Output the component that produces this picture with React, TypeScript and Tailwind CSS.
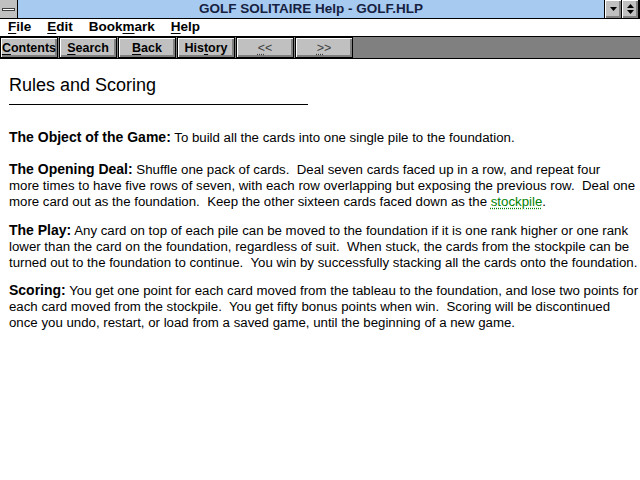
const MENUS = [
  { key: "F", rest: "ile" },
  { key: "E", rest: "dit" },
  { pre: "Book", key: "m", rest: "ark" },
  { key: "H", rest: "elp" },
];

const BUTTONS = [
  { key: "C", rest: "ontents" },
  { key: "S", rest: "earch" },
  { key: "B", rest: "ack" },
  { pre: "His", key: "t", rest: "ory" },
];

function Bevel({ children }: { children: React.ReactNode }) {
  return (
    <div className="flex h-[18px] w-[17px] items-center justify-center border-l border-black bg-[#c0c0c0] shadow-[inset_1px_1px_0_#fff,inset_-1px_-1px_0_#808080,inset_-2px_-2px_0_#808080]">
      {children}
    </div>
  );
}

function ToolButton({ children, dim }: { children: React.ReactNode; dim?: boolean }) {
  return (
    <button
      type="button"
      className={`flex h-[21px] w-[58px] items-center justify-center border border-black bg-[#c0c0c0] pt-[1px] text-[12.5px] shadow-[inset_1px_1px_0_#fff,inset_-1px_-1px_0_#808080,inset_-2px_-2px_0_#808080] ${
        dim ? "font-normal text-[#404040]" : "font-bold text-black"
      }`}
    >
      {children}
    </button>
  );
}

export default function App() {
  return (
    <div className="flex h-[480px] w-[640px] flex-col overflow-hidden bg-white font-['Liberation_Sans',Arial,sans-serif] text-black">
      <header className="flex h-[19px] border-b border-black">
        <div className="flex h-[18px] w-[18px] items-center justify-center border-r border-black bg-[#c0c0c0]">
          <div className="h-[3px] w-[13px] border border-[#404040] bg-white" />
        </div>
        <div className="flex flex-1 items-center justify-center bg-[#a6caf0] text-[13.5px] font-bold text-[#16213f]">
          GOLF SOLITAIRE Help - GOLF.HLP
        </div>
        <Bevel>
          <svg width="9" height="6" viewBox="0 0 9 6">
            <path d="M1 1h7L4.5 5z" fill="#000" />
          </svg>
        </Bevel>
        <Bevel>
          <svg width="9" height="12" viewBox="0 0 9 12">
            <path d="M4.5 1L8 5H1zM1 7h7L4.5 11z" fill="#000" />
          </svg>
        </Bevel>
        <div className="w-[2px] bg-black" />
      </header>

      <nav className="flex h-[18px] items-center gap-[16px] border-b border-black pl-[8px] pr-[2px] text-[13.5px] font-bold">
        {MENUS.map((m) => (
          <span key={m.rest}>
            {m.pre}
            <span className="underline underline-offset-2">{m.key}</span>
            {m.rest}
          </span>
        ))}
      </nav>

      <div className="flex h-[22px] gap-[1px] border-b border-black bg-[#808080]">
        {BUTTONS.map((b) => (
          <ToolButton key={b.rest}>
            {b.pre}
            <span className="underline underline-offset-2">{b.key}</span>
            {b.rest}
          </ToolButton>
        ))}
        <ToolButton dim>
          <span className="underline decoration-dotted underline-offset-2">&lt;</span>&lt;
        </ToolButton>
        <ToolButton dim>
          <span className="underline decoration-dotted underline-offset-2">&gt;</span>&gt;
        </ToolButton>
      </div>

      <main className="whitespace-pre pl-[9px] pt-[16px] text-[13.25px] leading-[16px]">
        <h1 className="text-[18px] leading-[20px]">Rules and Scoring</h1>
        <div className="mt-[9px] h-px w-[299px] bg-black" />

        <p className="mt-[24px]">
          <b className="text-[14px]">The Object of the Game:</b> To build all the cards into one single pile to the foundation.
        </p>

        <p className="mt-[15px]">
          <b className="text-[14px]">The Opening Deal:</b> Shuffle one pack of cards.  Deal seven cards faced up in a row, and repeat four
          {"\n"}more times to have five rows of seven, with each row overlapping but exposing the previous row.  Deal one
          {"\n"}more card out as the foundation.  Keep the other sixteen cards faced down as the{" "}
          <span className="text-[#008000] underline decoration-dotted underline-offset-2">stockpile</span>.
        </p>

        <p className="mt-[12px]">
          <b className="text-[14px]">The Play:</b> Any card on top of each pile can be moved to the foundation if it is one rank higher or one rank
          {"\n"}lower than the card on the foundation, regardless of suit.  When stuck, the cards from the stockpile can be
          {"\n"}turned out to the foundation to continue.  You win by successfully stacking all the cards onto the foundation.
        </p>

        <p className="mt-[11px]">
          <b className="text-[14px]">Scoring:</b> You get one point for each card moved from the tableau to the foundation, and lose two points for
          {"\n"}each card moved from the stockpile.  You get fifty bonus points when win.  Scoring will be discontinued
          {"\n"}once you undo, restart, or load from a saved game, until the beginning of a new game.
        </p>
      </main>
    </div>
  );
}
